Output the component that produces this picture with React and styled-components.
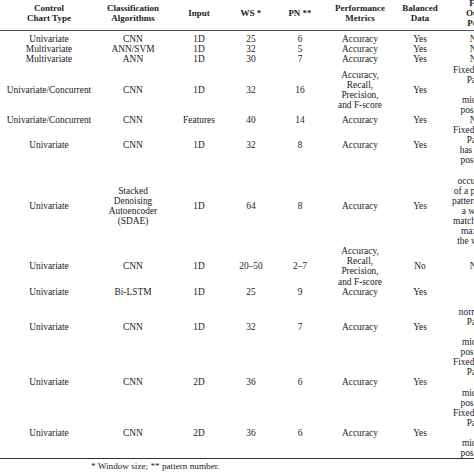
import React from "react";
import styled, { createGlobalStyle } from "styled-components";

const GlobalStyle = createGlobalStyle`
  html,
  body {
    margin: 0;
    padding: 0;
    background: #ffffff;
    overflow: hidden;
  }
`;

const Page = styled.div`
  width: 100%;
  height: 474px;
  overflow: hidden;
  background: #ffffff;
  color: #222222;
  font-family: "Liberation Serif", "Times New Roman", serif;
`;

const Table = styled.table`
  width: 512px;
  margin-top: -2px;
  table-layout: fixed;
  border-collapse: separate;
  border-spacing: 0;

  tbody tr:first-child td {
    padding-top: 3px;
  }

  tbody tr:last-child td {
    border-bottom: 1.5px solid #333333;
  }
`;

const Col = styled.col`
  width: ${(p) => p.$w}px;
`;

const HeadCell = styled.th`
  padding: 0 0 2px;
  border-bottom: 1px solid #555555;
  font-size: 9px;
  font-weight: bold;
  line-height: 10.1px;
  text-align: center;
  vertical-align: middle;
  white-space: nowrap;
`;

const Cell = styled.td`
  padding: 0;
  font-size: 9.4px;
  line-height: 10.1px;
  text-align: center;
  vertical-align: middle;
  white-space: nowrap;
`;

const Footnote = styled.p`
  margin: 1.5px 0 0 91px;
  font-size: 9.2px;
  line-height: 10px;
`;

const widths = [98, 70, 62, 42, 56, 64, 56, 64];

const headers = [
  ["Control", "Chart Type"],
  ["Classification", "Algorithms"],
  "Input",
  "WS *",
  "PN **",
  ["Performance", "Metrics"],
  ["Balanced", "Data"],
  ["Fixed", "Output", "Period"],
];

const fourMetrics = ["Accuracy,", "Recall,", "Precision,", "and F-score"];
const fixedPos = ["Fixed position", "Pattern", "in", "middle of", "positioned"];

// last column runs past the right edge, only its left part shows
const rows = [
  ["Univariate", "CNN", "1D", "25", "6", "Accuracy", "Yes", "None"],
  ["Multivariate", "ANN/SVM", "1D", "32", "5", "Accuracy", "Yes", "None"],
  ["Multivariate", "ANN", "1D", "30", "7", "Accuracy", "Yes", "None"],
  ["Univariate/Concurrent", "CNN", "1D", "32", "16", fourMetrics, "Yes", fixedPos],
  ["Univariate/Concurrent", "CNN", "Features", "40", "14", "Accuracy", "Yes", "None"],
  [
    "Univariate",
    "CNN",
    "1D",
    "32",
    "8",
    "Accuracy",
    "Yes",
    ["Fixed position", "Pattern", "has a fixed", "positioned"],
  ],
  [
    "Univariate",
    ["Stacked", "Denoising", "Autoencoder", "(SDAE)"],
    "1D",
    "64",
    "8",
    "Accuracy",
    "Yes",
    [
      "of",
      "occurrences",
      "of a pattern in",
      "patterns within",
      "a window",
      "matching with",
      "maximum",
      "the window.",
    ],
  ],
  ["Univariate", "CNN", "1D", "20–50", "2–7", fourMetrics, "No", "None"],
  ["Univariate", "Bi-LSTM", "1D", "25", "9", "Accuracy", "Yes", "–"],
  [
    "Univariate",
    "CNN",
    "1D",
    "32",
    "7",
    "Accuracy",
    "Yes",
    ["of", "normal and", "Pattern", "in", "middle of", "positioned"],
  ],
  ["Univariate", "CNN", "2D", "36", "6", "Accuracy", "Yes", fixedPos],
  ["Univariate", "CNN", "2D", "36", "6", "Accuracy", "Yes", fixedPos],
];

const Lines = ({ value }) => {
  if (!Array.isArray(value)) return value;
  return value.map((line, i) => (
    <React.Fragment key={i}>
      {i > 0 && <br />}
      {line}
    </React.Fragment>
  ));
};

const App = () => {
  return (
    <Page>
      <GlobalStyle />
      <Table>
        <colgroup>
          {widths.map((w, i) => (
            <Col key={i} $w={w} />
          ))}
        </colgroup>
        <thead>
          <tr>
            {headers.map((h, i) => (
              <HeadCell key={i}>
                <Lines value={h} />
              </HeadCell>
            ))}
          </tr>
        </thead>
        <tbody>
          {rows.map((row, r) => (
            <tr key={r}>
              {row.map((cell, c) => (
                <Cell key={c}>
                  <Lines value={cell} />
                </Cell>
              ))}
            </tr>
          ))}
        </tbody>
      </Table>
      <Footnote>* Window size; ** pattern number.</Footnote>
    </Page>
  );
};

export default App;
